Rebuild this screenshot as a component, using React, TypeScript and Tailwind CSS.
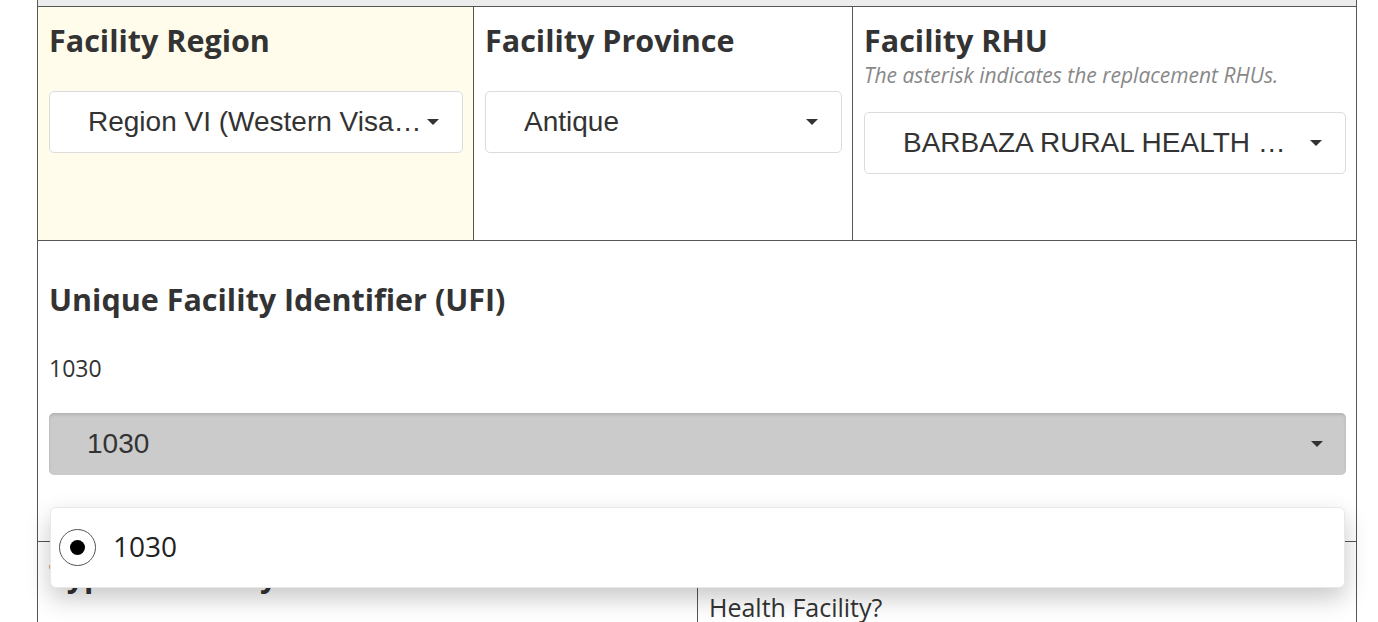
import React from "react";

function Caret() {
  return (
    <svg width="12" height="6" viewBox="0 0 12 6" className="shrink-0">
      <polygon points="0,0 12,0 6,6" fill="#333" />
    </svg>
  );
}

function Select({ text, className = "" }: { text: string; className?: string }) {
  return (
    <div
      className={
        "h-[62px] flex items-center pl-[38px] pr-[23px] rounded-[5px] font-['Liberation_Sans',Arial,sans-serif] text-[28px] text-[#333] " +
        className
      }
    >
      <span className="flex-1 whitespace-nowrap overflow-hidden">{text}</span>
      <Caret />
    </div>
  );
}

export default function App() {
  return (
    <div className="relative w-[1378px] h-[622px] overflow-hidden bg-white font-['Open_Sans',sans-serif] text-[#333]">
      <div className="ml-[37px] w-[1320px] h-[622px] border-x border-[#555]">
        <div className="h-[7px] bg-[#ececec] border-b border-[#555]" />

        {/* Row 1 */}
        <div className="flex h-[234px] border-b border-[#555]">
          <div className="w-[436px] shrink-0 bg-[#fffcec] border-r border-[#555] pl-[11px] pr-[10px] pt-[13px]">
            <div className="text-[30.5px] font-bold leading-[40px]">Facility Region</div>
            <Select
              text="Region VI (Western Visa…"
              className="mt-[31px] bg-white border border-[#dcdcdc]"
            />
          </div>
          <div className="w-[379px] shrink-0 border-r border-[#555] pl-[11px] pr-[10px] pt-[13px]">
            <div className="text-[30.5px] font-bold leading-[40px]">Facility Province</div>
            <Select text="Antique" className="mt-[31px] bg-white border border-[#dcdcdc]" />
          </div>
          <div className="flex-1 pl-[11px] pr-[10px] pt-[13px]">
            <div className="text-[30.5px] font-bold leading-[40px]">Facility RHU</div>
            <div className="text-[21px] italic leading-[30px] text-[#888]">
              The asterisk indicates the replacement RHUs.
            </div>
            <Select
              text="BARBAZA RURAL HEALTH …"
              className="mt-[22px] bg-white border border-[#dcdcdc]"
            />
          </div>
        </div>

        {/* Row 2 */}
        <div className="h-[301px] border-b border-[#555] pl-[11px] pr-[10px] pt-[38px]">
          <div className="text-[30.5px] font-bold leading-[40px]">Unique Facility Identifier (UFI)</div>
          <div className="mt-[33px] text-[23px] leading-[32px]">1030</div>
          <Select
            text="1030"
            className="mt-[29px] h-[61px] bg-[#cbcbcb] rounded-[4px] shadow-[inset_0_2px_3px_rgba(0,0,0,0.12)]"
          />
        </div>

        {/* Row 3 */}
        <div className="flex">
          <div className="w-[660px] shrink-0 border-r border-[#555] pl-[11px] pt-[13px] h-[120px]">
            <div className="text-[30.5px] font-bold leading-[40px]">Type of Facility</div>
          </div>
          <div className="flex-1 pl-[11px] pt-[8px] text-[25px] leading-[38px]">
            Is this a Primary Care
            <br />
            Health Facility?
          </div>
        </div>
      </div>

      {/* Open dropdown menu */}
      <div className="absolute left-[50px] top-[507px] w-[1295px] h-[81px] rounded-[6px] bg-white border border-[#e8e8e8] shadow-[0_10px_24px_rgba(0,0,0,0.22)] flex items-center pl-[8px]">
        <div className="w-[37px] h-[37px] rounded-full border-[1.5px] border-[#555] flex items-center justify-center">
          <div className="w-[15px] h-[15px] rounded-full bg-black" />
        </div>
        <span className="ml-[17px] text-[28px] text-[#222] leading-none -mt-[3px]">1030</span>
      </div>
    </div>
  );
}
